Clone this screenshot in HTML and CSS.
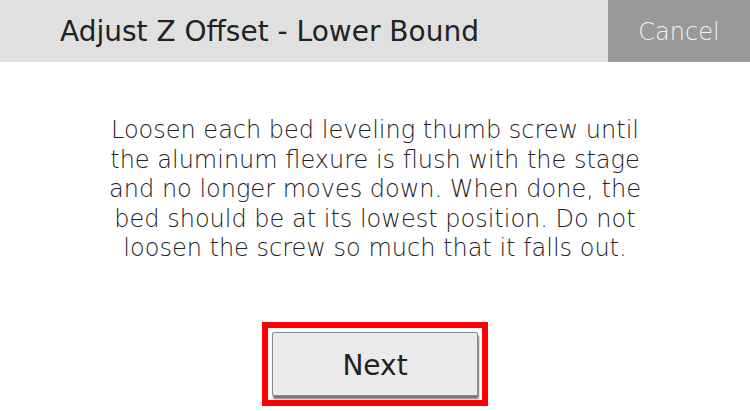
FILE: index.html
```html
<!DOCTYPE html>
<html lang="en">
<head>
    <meta charset="UTF-8">
    <meta name="viewport" content="width=device-width, initial-scale=1.0">
    <title>Adjust Z Offset - Lower Bound</title>
    <link rel="stylesheet" href="styles.css">
</head>
<body>
    <header class="top-bar">
        <h1 class="title">Adjust Z Offset - Lower Bound</h1>
        <button class="cancel">Cancel</button>
    </header>

    <main class="content">
        <p class="instructions">
            Loosen each bed leveling thumb screw until<br>
            the aluminum flexure is flush with the stage<br>
            and no longer moves down. When done, the<br>
            bed should be at its lowest position. Do not<br>
            loosen the screw so much that it falls out.
        </p>

        <div class="focus-ring">
            <button class="next">Next</button>
        </div>
    </main>
</body>
</html>
```

FILE: styles.css
```css
html, body {
    margin: 0;
    padding: 0;
    width: 750px;
    height: 411px;
    overflow: hidden;
    background: #ffffff;
    font-family: "DejaVu Sans", sans-serif;
}
.top-bar {
    display: flex;
    height: 62px;
    background-color: #e0e0e0;
}
.title {
    flex: 1;
    margin: 0;
    padding: 2px 0 0 60px;
    font-size: 28px;
    font-weight: normal;
    line-height: 60px;
    color: #222;
}
.cancel {
    width: 142px;
    border: none;
    background-color: #999999;
    color: #f2f2f2;
    font-family: "DejaVu Sans", sans-serif;
    font-weight: 200;
    font-size: 24px;
    padding: 2px 0 0;
}
.content {
    display: flex;
    flex-direction: column;
    align-items: center;
}
.instructions {
    margin: 54px 0 0;
    text-align: center;
    font-size: 24px;
    font-weight: 200;
    line-height: 29.5px;
    color: #222;
}
.focus-ring {
    margin-top: 58px;
    padding: 4px;
    border: 6px solid #ff0000;
}
.next {
    display: block;
    width: 206px;
    height: 64px;
    padding-top: 4px;
    border: 1px solid #8a8a8a;
    border-radius: 2px;
    background-color: #ebebeb;
    box-shadow: 1px 3px 2px #777;
    color: #222;
    font-family: "DejaVu Sans", sans-serif;
    font-size: 28px;
}
```
